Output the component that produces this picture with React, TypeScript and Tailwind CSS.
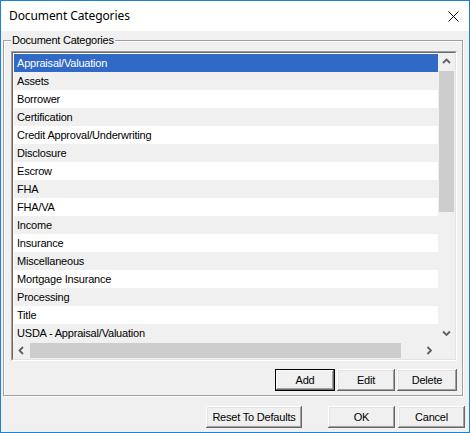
import React from "react";

const categories = [
  "Appraisal/Valuation",
  "Assets",
  "Borrower",
  "Certification",
  "Credit Approval/Underwriting",
  "Disclosure",
  "Escrow",
  "FHA",
  "FHA/VA",
  "Income",
  "Insurance",
  "Miscellaneous",
  "Mortgage Insurance",
  "Processing",
  "Title",
  "USDA - Appraisal/Valuation",
];

type Dir = "up" | "down" | "left" | "right";

function Chevron({ dir }: { dir: Dir }) {
  const pts: Record<Dir, string> = {
    up: "1,5 4.5,1.5 8,5",
    down: "1,1.5 4.5,5 8,1.5",
    left: "5,1 1.5,4.5 5,8",
    right: "1.5,1 5,4.5 1.5,8",
  };
  const vertical = dir === "up" || dir === "down";
  return (
    <svg
      width={vertical ? 9 : 7}
      height={vertical ? 7 : 9}
      viewBox={vertical ? "0 0 9 7" : "0 0 7 9"}
    >
      <polyline points={pts[dir]} fill="none" stroke="#606060" strokeWidth={1.8} />
    </svg>
  );
}

function WinButton({
  children,
  width,
  isDefault,
}: {
  children: React.ReactNode;
  width: string;
  isDefault?: boolean;
}) {
  return (
    <button
      className={
        "h-[22px] bg-[#f0f0f0] text-[11px] tracking-[-0.2px] text-black flex items-center justify-center " +
        width +
        (isDefault
          ? " border border-[#000] shadow-[inset_-1px_-1px_#696969,inset_1px_1px_#fff,inset_-2px_-2px_#a0a0a0]"
          : " shadow-[inset_-1px_-1px_#696969,inset_1px_1px_#fff,inset_-2px_-2px_#a0a0a0,inset_2px_2px_#e3e3e3]")
      }
    >
      {children}
    </button>
  );
}

export default function App() {
  return (
    <div
      className="w-[470px] h-[433px] border border-[#1883d7] bg-[#f0f0f0] flex flex-col overflow-hidden text-black"
      style={{ fontFamily: '"Liberation Sans", Arial, sans-serif' }}
    >
      {/* title bar */}
      <div className="h-[30px] bg-white flex items-center justify-between pl-[8px] pr-[10px] shrink-0">
        <span
          className="text-[12px] tracking-[-0.1px] pb-[1px]"
          style={{ fontFamily: '"Noto Sans", "Liberation Sans", sans-serif' }}
        >
          Document Categories
        </span>
        <svg width="11" height="11" viewBox="0 0 11 11">
          <path d="M0.5 0.5 L10.5 10.5 M10.5 0.5 L0.5 10.5" stroke="#000" strokeWidth={1} />
        </svg>
      </div>

      {/* body */}
      <div className="flex-1 flex flex-col pt-[3px] pl-[2px] pr-[6px]">
        <fieldset className="w-[460px] border border-[#a0a0a0] shadow-[inset_1px_1px_#fff,1px_1px_#fff] pl-[7px] pr-[5px] pt-[4px] pb-[4px]">
          <legend className="ml-0 px-[1px] bg-[#f0f0f0] text-[11px] leading-[13px] tracking-[-0.25px]">
            Document Categories
          </legend>

          {/* listbox: outer sunken edge */}
          <div className="w-[446px] h-[310px] border border-t-[#a0a0a0] border-l-[#a0a0a0] border-r-white border-b-white">
            <div className="h-full border border-t-[#696969] border-l-[#696969] border-r-[#e3e3e3] border-b-[#e3e3e3] flex flex-col">
              <div className="flex h-[289px] shrink-0">
                <div className="flex-1 bg-white pl-[1px] pt-[1px] overflow-hidden">
                  {categories.map((c, i) => (
                    <div
                      key={c}
                      className={
                        "h-[18px] pl-[3px] text-[11px] leading-[18px] tracking-[-0.2px] whitespace-nowrap " +
                        (i === 0
                          ? "bg-[#3169c6] text-white"
                          : i % 2 === 1
                            ? "bg-[#f0f0f0]"
                            : "bg-white")
                      }
                    >
                      {c}
                    </div>
                  ))}
                </div>
                {/* vertical scrollbar */}
                <div className="w-[17px] bg-[#f0f0f0] flex flex-col">
                  <div className="h-[17px] flex items-center justify-center">
                    <Chevron dir="up" />
                  </div>
                  <div className="h-[141px] mt-[1px] mx-[1px] bg-[#cdcdcd]" />
                  <div className="flex-1" />
                  <div className="h-[17px] flex items-center justify-center">
                    <Chevron dir="down" />
                  </div>
                </div>
              </div>
              {/* horizontal scrollbar */}
              <div className="flex h-[17px] shrink-0">
                <div className="flex-1 bg-[#f0f0f0] flex items-center">
                  <div className="w-[17px] h-full flex items-center justify-center">
                    <Chevron dir="left" />
                  </div>
                  <div className="w-[371px] h-[15px] bg-[#cdcdcd]" />
                  <div className="flex-1" />
                  <div className="w-[17px] h-full flex items-center justify-center">
                    <Chevron dir="right" />
                  </div>
                </div>
                <div className="w-[17px] bg-[#f0f0f0]" />
              </div>
            </div>
          </div>

          <div className="flex justify-end gap-[2px] mt-[8px] w-[446px]">
            <WinButton width="w-[60px]" isDefault>
              Add
            </WinButton>
            <WinButton width="w-[58px]">Edit</WinButton>
            <WinButton width="w-[60px]">Delete</WinButton>
          </div>
        </fieldset>

        <div className="flex justify-end mt-[10px] mr-[-2px]">
          <WinButton width="w-[96px] mr-[26px]">Reset To Defaults</WinButton>
          <WinButton width="w-[67px] mr-[3px]">OK</WinButton>
          <WinButton width="w-[67px]">Cancel</WinButton>
        </div>
      </div>
    </div>
  );
}
